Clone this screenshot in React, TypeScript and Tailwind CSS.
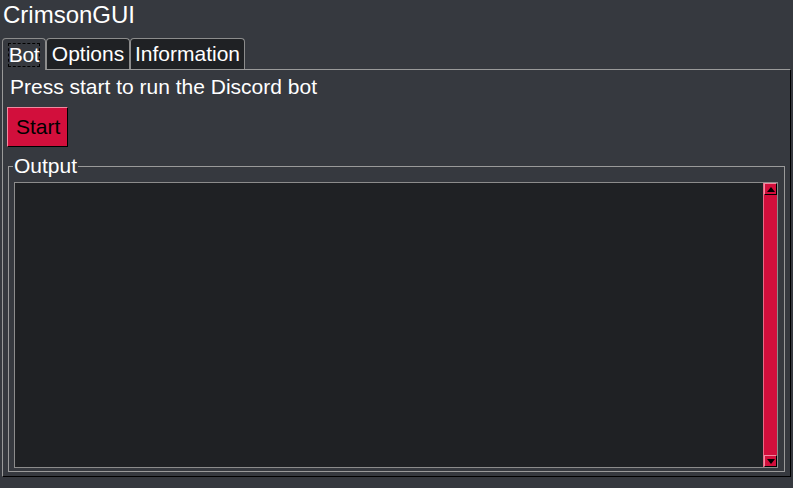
export default function App() {
  return (
    <div
      className="w-[793px] h-[488px] bg-[#36393f] text-white overflow-hidden flex flex-col"
      style={{ fontFamily: '"Liberation Sans", Arial, sans-serif' }}
    >
      {/* Title */}
      <div className="h-[38px] pl-[3px] text-[24px] leading-[30px]">CrimsonGUI</div>

      {/* Tabs */}
      <div className="flex items-end h-[31px] pl-[2px]">
        <div className="h-[32px] w-[44px] border border-b-0 border-[#8c8c8c] rounded-t-[4px] bg-[#36393f] flex items-center justify-center relative z-10 -mb-px">
          <span className="border border-dashed border-black text-[21px] leading-[22px] tracking-[-0.3px]">Bot</span>
        </div>
        <div className="h-[31px] w-[84px] border border-b-0 border-[#8c8c8c] rounded-t-[4px] bg-[#1f2124] flex items-center justify-center text-[21px] leading-[22px]">
          Options
        </div>
        <div className="h-[31px] w-[115px] border border-b-0 border-[#8c8c8c] rounded-t-[4px] bg-[#1f2124] flex items-center justify-center text-[21px] leading-[22px]">
          Information
        </div>
      </div>

      {/* Panel */}
      <div className="ml-[2px] w-[789px] h-[408px] border border-[#9a9a9a] border-b-black border-r-black flex flex-col">
        <div className="pl-[7px] pt-[5px] text-[21px] leading-[24px]">Press start to run the Discord bot</div>
        <button className="ml-[4px] mt-[8px] w-[61px] h-[40px] bg-[#d20f3c] text-black text-[21px] border border-[#f08aa0] border-b-black border-r-black text-left pl-[8px]">
          Start
        </button>

        {/* Output labelframe */}
        <div className="relative ml-[5px] mt-[19px] w-[777px] h-[306px] border border-[#9a9a9a] pt-[15px] pl-[5px]">
          <span className="absolute left-[4px] -top-[12px] bg-[#36393f] px-[1px] text-[21px] leading-[22px]">Output</span>
          <div className="w-[764px] h-[286px] border border-[#8c8c8c] bg-[#1f2124] flex justify-end">
            <div className="w-[14px] h-full bg-[#d20f3c] border-l border-[#e86b86] flex flex-col justify-between">
              <div className="h-[12px] border border-[#f08aa0] border-b-black border-r-black flex items-center justify-center">
                <svg width="8" height="5" viewBox="0 0 8 5"><path d="M0 5 L4 0 L8 5 Z" fill="black" /></svg>
              </div>
              <div className="h-[12px] border border-[#f08aa0] border-b-black border-r-black flex items-center justify-center">
                <svg width="8" height="5" viewBox="0 0 8 5"><path d="M0 0 L4 5 L8 0 Z" fill="black" /></svg>
              </div>
            </div>
          </div>
        </div>
      </div>
    </div>
  );
}
